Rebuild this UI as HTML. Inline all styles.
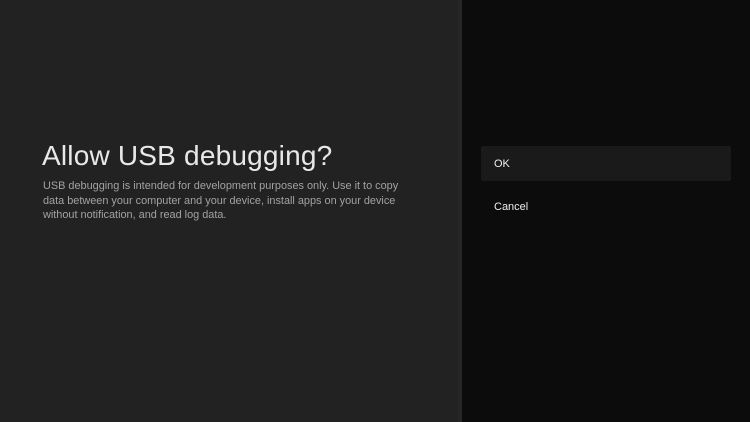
<!DOCTYPE html>
<html><head><style>
html,body{margin:0;padding:0;}
body{width:750px;height:422px;position:relative;overflow:hidden;background:#222;font-family:"Liberation Sans",sans-serif;}
.left{position:absolute;left:0;top:0;width:458px;height:422px;background:#222;}
.edge{position:absolute;left:458px;top:0;width:4px;height:422px;background:#262626;}
.right{position:absolute;left:462px;top:0;width:288px;height:422px;background:#0c0c0c;}
h1{position:absolute;left:42px;top:140px;margin:0;font-weight:normal;font-size:28px;color:#e8e8e8;letter-spacing:0.2px;white-space:nowrap;}
p{position:absolute;left:43px;top:179px;margin:0;font-size:10.9px;line-height:14.7px;color:#a2a2a2;width:400px;}
.ok{position:absolute;left:481px;top:146px;width:250px;height:35px;background:#1a1a1a;border-radius:2px;}
.btn{position:absolute;left:494px;font-size:11px;color:#eee;}
</style></head><body>
<div class="left"></div><div class="edge"></div><div class="right"></div>
<h1>Allow USB debugging?</h1>
<p>USB debugging is intended for development purposes only. Use it to copy<br>data between your computer and your device, install apps on your device<br>without notification, and read log data.</p>
<div class="ok"></div>
<div class="btn" style="top:158px">OK</div>
<div class="btn" style="top:201px">Cancel</div>
</body></html>
